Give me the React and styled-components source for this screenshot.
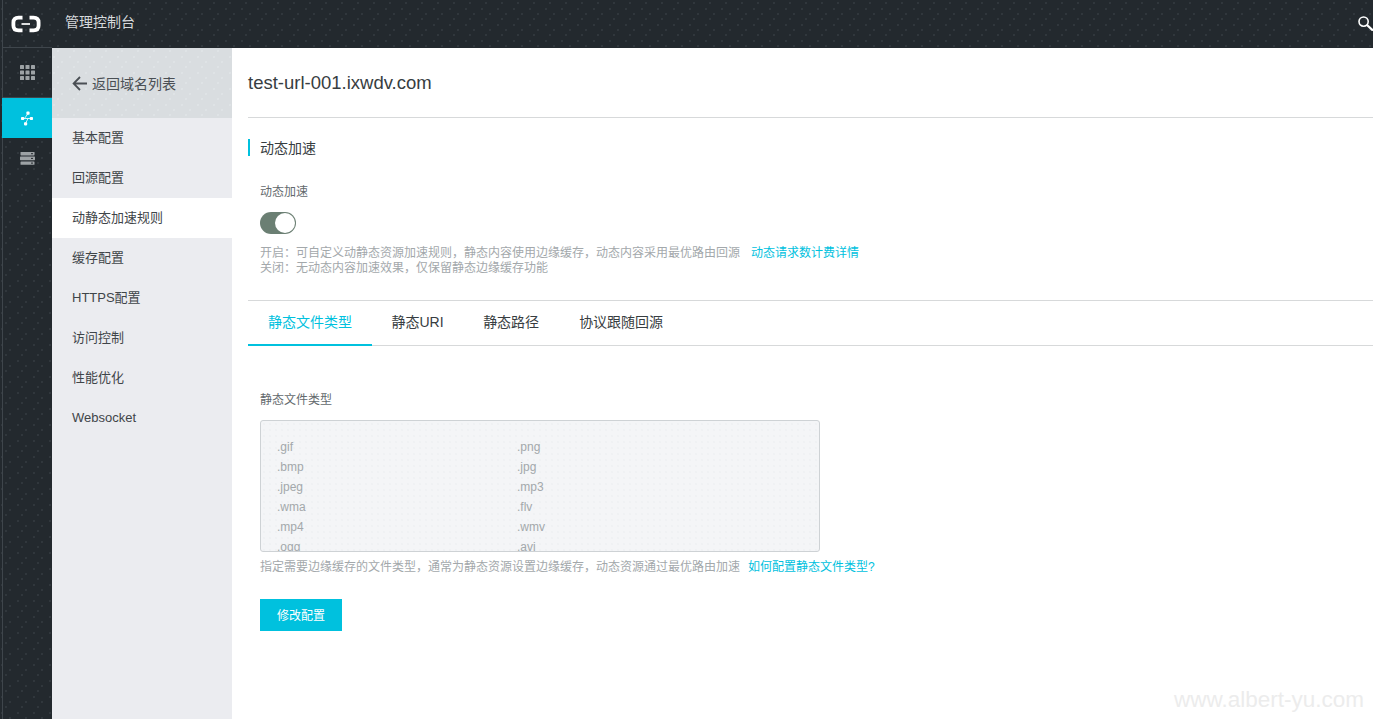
import React from 'react';
import styled, { createGlobalStyle } from 'styled-components';

const GlobalStyle = createGlobalStyle`
  html, body {
    margin: 0;
    padding: 0;
    height: 100%;
    background: #fff;
    overflow: hidden;
  }
  body {
    font-family: "Liberation Sans", "Noto Sans CJK SC", sans-serif;
    color: #333;
  }
  * {
    box-sizing: border-box;
  }
`;

const dots = (color) => `
  background-image:
    radial-gradient(circle, ${color} 0.55px, transparent 0.8px),
    radial-gradient(circle, ${color} 0.55px, transparent 0.8px),
    radial-gradient(circle, ${color} 0.55px, transparent 0.8px);
  background-size: 16px 16px;
  background-position: -6px 1px, 2px 6px, -2px 11px;
`;

const Page = styled.div`
  position: relative;
  width: 1373px;
  height: 719px;
  overflow: hidden;
  display: flex;
  flex-direction: column;
`;

const Header = styled.header`
  height: 48px;
  flex: none;
  display: flex;
  align-items: center;
  padding-left: 2px;
  background-color: #23292e;
  ${dots('#464e54')}
`;

const LogoCell = styled.div`
  width: 50px;
  height: 48px;
  flex: none;
  display: flex;
  align-items: center;
  padding: 0 0 1px 9px;
  box-shadow: inset 1px 0 0 #3f464c;
`;

const HeaderTitle = styled.div`
  flex: 1;
  padding-left: 13px;
  padding-bottom: 6px;
  font-size: 14px;
  color: #d6d9dc;
`;

const SearchButton = styled.div`
  display: flex;
  margin-bottom: 1px;
`;

const Body = styled.div`
  flex: 1;
  display: flex;
  min-height: 0;
`;

const Rail = styled.nav`
  width: 52px;
  flex: none;
  padding-left: 2px;
  display: flex;
  flex-direction: column;
  background-color: #23292e;
  ${dots('#464e54')}
`;

const RailColumn = styled.div`
  flex: 1;
  box-shadow: inset 1px 0 0 #3f464c, 0 -1px 0 #3f464c;
`;

const RailItem = styled.div`
  height: ${(p) => p.$height}px;
  display: flex;
  align-items: center;
  justify-content: center;
  color: #fff;
  background: ${(p) => (p.$active ? '#00c1de' : 'transparent')};
  border-bottom: ${(p) => (p.$line ? '1px solid #3f464c' : 'none')};
`;

const SideNav = styled.aside`
  width: 180px;
  flex: none;
  background: #ebecf0;
`;

const BackRow = styled.div`
  height: 70px;
  display: flex;
  align-items: center;
  gap: 4px;
  padding-left: 20px;
  padding-bottom: 1px;
  font-size: 14px;
  color: #4a4f54;
  background-color: #d9dde0;
  ${dots('#e9ecee')}
`;

const NavItem = styled.div`
  height: 40px;
  display: flex;
  align-items: center;
  padding-left: 20px;
  padding-bottom: ${(p) => (p.$latin ? 2 : 4)}px;
  font-size: 13px;
  color: #3f4549;
  background: ${(p) => (p.$active ? '#fff' : 'transparent')};
`;

const Main = styled.main`
  flex: 1;
  min-width: 0;
  padding-left: 16px;
  background: #fff;
`;

const PageTitle = styled.h1`
  margin: 0;
  height: 70px;
  padding-top: 1px;
  display: flex;
  align-items: center;
  font-size: 18.5px;
  font-weight: 400;
  color: #373d41;
  border-bottom: 1px solid #d7d9da;
`;

const SectionTitle = styled.h2`
  margin: 21px 0 0;
  height: 17px;
  display: flex;
  align-items: center;
  padding-left: 10px;
  padding-bottom: 2px;
  font-size: 14px;
  font-weight: 400;
  color: #373d41;
  border-left: 2px solid #00c1de;
`;

const Field = styled.div`
  padding-left: 12px;
  margin-top: ${(p) => p.$top}px;
`;

const Label = styled.div`
  font-size: 12px;
  line-height: 16px;
  color: #63696d;
`;

const Toggle = styled.div`
  position: relative;
  width: 36px;
  height: 22px;
  margin-top: 12px;
  border-radius: 11px;
  background: #6b7f73;
  &::after {
    content: '';
    position: absolute;
    top: 1px;
    right: 1px;
    width: 20px;
    height: 20px;
    border-radius: 50%;
    background: #fff;
  }
`;

const Help = styled.div`
  margin-top: ${(p) => p.$top}px;
  font-size: 12px;
  line-height: 15px;
  color: #a3a8ab;
`;

const HelpLink = styled.a`
  margin-left: ${(p) => p.$gap}px;
  color: #00c1de;
`;

const TabBar = styled.div`
  margin-top: 24px;
  display: flex;
  height: 46px;
  border-top: 1px solid #d7d9da;
  border-bottom: 1px solid #d7d9da;
`;

const Tab = styled.div`
  height: 45px;
  padding: 0 ${(p) => p.$pad}px 3px;
  display: flex;
  align-items: center;
  font-size: 14px;
  color: ${(p) => (p.$active ? '#00c1de' : '#373d41')};
  border-bottom: 2px solid ${(p) => (p.$active ? '#00c1de' : 'transparent')};
`;

const TypeBox = styled.div`
  width: 560px;
  height: 132px;
  margin-top: 12px;
  padding: 16px 16px 0;
  overflow: hidden;
  display: grid;
  grid-template-columns: 240px 240px;
  grid-auto-rows: 20px;
  font-size: 12px;
  line-height: 20px;
  color: #a3a8ab;
  border: 1px solid #ced2d5;
  border-radius: 3px;
  background-color: #f4f5f7;
  background-image: radial-gradient(circle, #e9ebee 0.55px, transparent 0.8px);
  background-size: 6px 6px;
`;

const SaveButton = styled.button`
  display: block;
  width: 82px;
  height: 32px;
  margin-top: 24px;
  padding: 0 0 2px;
  border: none;
  font-family: inherit;
  font-size: 12px;
  color: #fff;
  background: #00c1de;
`;

const Watermark = styled.div`
  position: absolute;
  right: 9px;
  bottom: 6px;
  font-size: 22.5px;
  color: #ececec;
`;

const Logo = () => (
  <svg width="30" height="18" viewBox="0 0 30 18" fill="none">
    <path
      d="M11.5 2.6H7.5Q2.4 2.6 2.4 7.5V10.5Q2.4 15.4 7.5 15.4H11.5M18.5 2.6H22.5Q27.6 2.6 27.6 7.5V10.5Q27.6 15.4 22.5 15.4H18.5"
      stroke="#fff"
      strokeWidth="3.8"
    />
    <path d="M10.5 9H19" stroke="#fff" strokeWidth="1.7" />
  </svg>
);

const SearchIcon = () => (
  <svg width="15" height="15" viewBox="0 0 15 15" fill="none" stroke="#fff">
    <circle cx="5.6" cy="5.6" r="4.6" strokeWidth="1.6" />
    <path d="M9 9 15 14.6" strokeWidth="2.2" />
  </svg>
);

const BackArrow = () => (
  <svg width="16" height="16" viewBox="0 0 16 16" fill="none" stroke="#4a4f54" strokeWidth="1.8">
    <path d="M1.5 8.5H15M8 2 1.6 8.5 8 15" />
  </svg>
);

const GridIcon = () => (
  <svg width="15" height="15" viewBox="0 0 15 15" fill="#9da2a5">
    {[0, 5.5, 11].map((y) =>
      [0, 5.5, 11].map((x) => <rect key={`${x}-${y}`} x={x} y={y} width="4" height="4" rx="0.6" />)
    )}
  </svg>
);

const LinkIcon = () => (
  <svg width="12" height="15" viewBox="0 0 12 15" fill="#fff">
    <path d="M7 2.5 3.5 7.5M10 7.5H2M7 7.5 4.5 12.5" stroke="#fff" strokeWidth="0.8" />
    <rect x="5.4" y="0.6" width="3.2" height="3.2" rx="0.8" />
    <rect x="0" y="5.9" width="3.2" height="3.2" rx="0.8" />
    <rect x="8.8" y="5.9" width="3.2" height="3.2" rx="0.8" />
    <rect x="3" y="11.2" width="3.2" height="3.2" rx="0.8" />
  </svg>
);

const ServerIcon = () => (
  <svg width="15" height="13" viewBox="0 0 15 13" fill="#9da2a5">
    <rect x="0.5" y="0" width="14" height="3.4" rx="0.6" />
    <rect x="0" y="4.6" width="15" height="3.6" rx="0.6" />
    <rect x="0.5" y="9.4" width="14" height="3.4" rx="0.6" />
    <rect x="11" y="1.2" width="2" height="1" fill="#23292e" />
    <rect x="11" y="5.9" width="2" height="1" fill="#23292e" />
    <rect x="11" y="10.6" width="2" height="1" fill="#23292e" />
  </svg>
);

const navItems = ['基本配置', '回源配置', '动静态加速规则', '缓存配置', 'HTTPS配置', '访问控制', '性能优化', 'Websocket'];
const tabs = [
  { label: '静态文件类型', pad: 20 },
  { label: '静态URI', pad: 19.5 },
  { label: '静态路径', pad: 20 },
  { label: '协议跟随回源', pad: 20 },
];
const fileTypes = ['.gif', '.png', '.bmp', '.jpg', '.jpeg', '.mp3', '.wma', '.flv', '.mp4', '.wmv', '.ogg', '.avi'];

const App = () => {
  return (
    <Page>
      <GlobalStyle />
      <Header>
        <LogoCell>
          <Logo />
        </LogoCell>
        <HeaderTitle>管理控制台</HeaderTitle>
        <SearchButton>
          <SearchIcon />
        </SearchButton>
      </Header>
      <Body>
        <Rail>
          <RailColumn>
            <RailItem $height={50} $line>
              <GridIcon />
            </RailItem>
            <RailItem $height={40} $active>
              <LinkIcon />
            </RailItem>
            <RailItem $height={40}>
              <ServerIcon />
            </RailItem>
          </RailColumn>
        </Rail>
        <SideNav>
          <BackRow>
            <BackArrow />
            返回域名列表
          </BackRow>
          {navItems.map((item) => (
            <NavItem key={item} $active={item === '动静态加速规则'} $latin={item === 'Websocket'}>
              {item}
            </NavItem>
          ))}
        </SideNav>
        <Main>
          <PageTitle>test-url-001.ixwdv.com</PageTitle>
          <SectionTitle>动态加速</SectionTitle>
          <Field $top={28}>
            <Label>动态加速</Label>
            <Toggle />
            <Help $top={12}>
              开启：可自定义动静态资源加速规则，静态内容使用边缘缓存，动态内容采用最优路由回源
              <HelpLink $gap={11}>动态请求数计费详情</HelpLink>
              <br />
              关闭：无动态内容加速效果，仅保留静态边缘缓存功能
            </Help>
          </Field>
          <TabBar>
            {tabs.map((tab, i) => (
              <Tab key={tab.label} $pad={tab.pad} $active={i === 0}>
                {tab.label}
              </Tab>
            ))}
          </TabBar>
          <Field $top={46}>
            <Label>静态文件类型</Label>
            <TypeBox>
              {fileTypes.map((type) => (
                <div key={type}>{type}</div>
              ))}
            </TypeBox>
            <Help $top={8}>
              指定需要边缘缓存的文件类型，通常为静态资源设置边缘缓存，动态资源通过最优路由加速
              <HelpLink $gap={8}>如何配置静态文件类型?</HelpLink>
            </Help>
            <SaveButton>修改配置</SaveButton>
          </Field>
        </Main>
      </Body>
      <Watermark>www.albert-yu.com</Watermark>
    </Page>
  );
};

export default App;
